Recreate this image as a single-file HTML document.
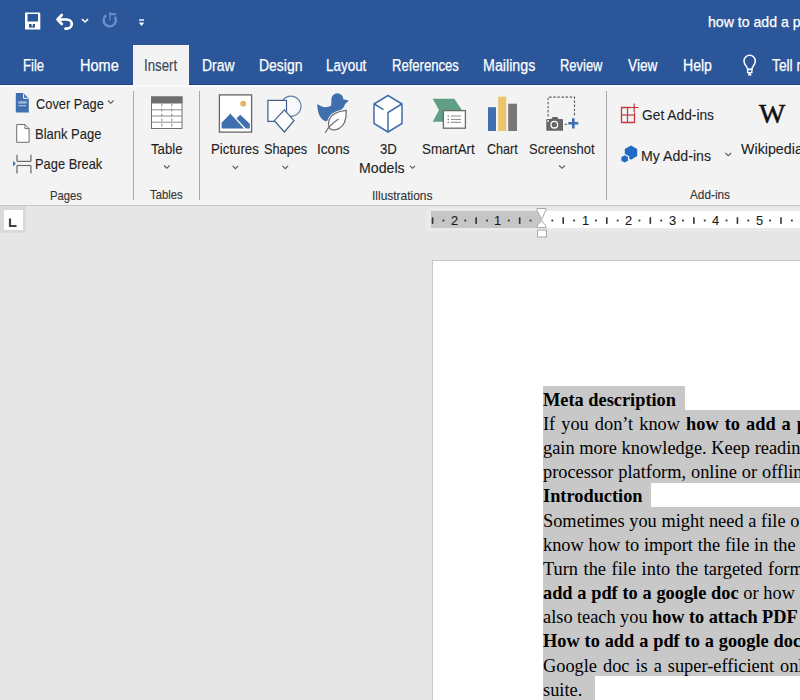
<!DOCTYPE html>
<html><head><meta charset="utf-8">
<style>
*{margin:0;padding:0;box-sizing:border-box}
html,body{width:800px;height:700px;overflow:hidden;background:#e6e6e6;font-family:"Liberation Sans",sans-serif}
.abs{position:absolute}
#title{position:absolute;left:0;top:0;width:800px;height:85px;background:#2b579a}
#ribbon{position:absolute;left:0;top:85px;width:800px;height:121px;background:#f3f3f3;border-bottom:1px solid #c8c8c8}
.t{position:absolute;white-space:nowrap;transform-origin:0 0;line-height:1;-webkit-text-stroke:0.12px currentColor}
.t[style*="#ffffff"],.tab{-webkit-text-stroke:0.25px #fff}
.tab{color:#fff;font-size:15px}
.lbl{color:#262626;font-size:14px}
.grp{color:#3c3c3c;font-size:12px}
.sep{position:absolute;width:1px;background:#aaaaaa;top:91px;height:109px}
.doc{position:absolute;white-space:nowrap;font-family:"Liberation Serif",serif;font-size:18.35px;color:#000;line-height:1}
.hl{position:absolute;background:#c8c8c8}
</style></head><body>
<div id="title"></div>
<!-- Quick access toolbar -->
<svg class="abs" style="left:0;top:0" width="160" height="40">
  <!-- save -->
  <path d="M25 12.5h14.5l0.8 0.8v16.1h-15.3z" fill="#fff"/>
  <rect x="27.5" y="14" width="10.5" height="7.5" fill="#2b579a"/>
  <rect x="29" y="24" width="6" height="3.6" fill="#2b579a"/>
  <rect x="31.6" y="24" width="1.2" height="2.4" fill="#fff"/>
  <!-- undo -->
  <path d="M57.5 19.5 L61.8 15 M57.5 19.5 L61.8 24 M57.5 19.5 H66.5 A5.3 4.6 0 0 1 66.5 28.7 H65.5" fill="none" stroke="#fff" stroke-width="2.7" stroke-linecap="round" stroke-linejoin="round"/>
  <path d="M82 19.2 L85 22 L88 19.2" fill="none" stroke="#fff" stroke-width="1.6"/>
  <!-- redo faded -->
  <path d="M106.3 15.2 A6.1 6.1 0 1 0 114.8 16.8" fill="none" stroke="#6a8ccb" stroke-width="2.5"/>
  <path d="M109.9 12 V20.5" fill="none" stroke="#6a8ccb" stroke-width="1.3"/>
  <path d="M109.9 14.2 H116.2" fill="none" stroke="#6a8ccb" stroke-width="2"/>
  <!-- customize -->
  <rect x="139" y="19.3" width="5" height="1.4" fill="#fff"/>
  <path d="M138.8 22.5 H144.2 L141.5 26 Z" fill="#fff"/>
</svg>
<div class="t tab" style="left:708px;top:14.2px;font-size:15px;transform:scaleX(0.94)">how to add a pdf to a google doc - Word</div>

<!-- Tabs -->
<div class="abs" style="left:133px;top:45px;width:56px;height:41px;background:#f3f3f3"></div>
<svg class="abs" style="left:738px;top:54px" width="24" height="24">
  <path d="M9.6 15.2 C9.6 12.8 6 11 6 7 A5.65 5.65 0 0 1 17.3 7 C17.3 11 13.9 12.8 13.9 15.2 Z" fill="none" stroke="#fff" stroke-width="1.5"/>
  <rect x="9.6" y="15.6" width="4.3" height="3" fill="none" stroke="#fff" stroke-width="1.3"/>
  <rect x="10.2" y="19.3" width="3.1" height="2.3" fill="#fff"/>
</svg>

<div id="ribbon"></div>
<div class="abs" style="left:0;top:84px;width:133px;height:1px;background:#1f4378"></div>
<div class="abs" style="left:189px;top:84px;width:611px;height:1px;background:#1f4378"></div>
<div class="abs" style="left:0;top:85px;width:800px;height:2px;background:#f8fafd"></div>
<div class="sep" style="left:133px"></div>
<div class="sep" style="left:199px"></div>
<div class="sep" style="left:606px"></div>

<!-- Pages group -->
<svg class="abs" style="left:0;top:85px" width="140" height="100">
  <!-- cover page: y offset 85 -->
  <path d="M15.8 8.1 H23.3 L28.8 13.6 V27.4 H15.8 Z" fill="#3f6fae"/>
  <path d="M23.6 8.6 V13.3 H28.3" fill="none" stroke="#fff" stroke-width="1"/>
  <rect x="18.3" y="16.2" width="8.4" height="2.4" fill="#c3d3e8" opacity="0.75"/>
  <rect x="18.5" y="20.2" width="7.6" height="1" fill="#c3d3e8"/>
  <!-- blank page -->
  <path d="M16.7 39.5 H25 L29.1 43.6 V57.3 H16.7 Z" fill="#fff" stroke="#6e6e6e" stroke-width="1"/>
  <path d="M25 39.5 V43.6 H29.1" fill="none" stroke="#6e6e6e" stroke-width="1"/>
  <!-- page break -->
  <line x1="17" y1="69.8" x2="17" y2="76.4" stroke="#7a7a7a" stroke-width="1.4"/>
  <line x1="30.9" y1="69.8" x2="30.9" y2="76.4" stroke="#7a7a7a" stroke-width="1.4"/>
  <line x1="17" y1="80.5" x2="17" y2="88.6" stroke="#7a7a7a" stroke-width="1.4"/>
  <line x1="30.9" y1="80.5" x2="30.9" y2="88.6" stroke="#7a7a7a" stroke-width="1.4"/>
  <line x1="17" y1="76.4" x2="30.9" y2="76.4" stroke="#6e6e6e" stroke-width="1.2"/>
  <line x1="17" y1="80.5" x2="30.9" y2="80.5" stroke="#6e6e6e" stroke-width="1.2"/>
  <path d="M13 76 L15.9 78.6 L13 81.5 Z" fill="#3f6fae"/>
  <path d="M108 15.5 L110.8 18.3 L113.6 15.5" fill="none" stroke="#555" stroke-width="1.1"/>
</svg>

<!-- Tables group -->
<svg class="abs" style="left:140px;top:85px" width="60" height="100">
  <rect x="11.5" y="12" width="30.5" height="31.5" fill="#fff" stroke="#6e6e6e" stroke-width="1"/>
  <rect x="11" y="11.5" width="31.5" height="7" fill="#6e6e6e"/>
  <line x1="11.5" y1="24.8" x2="42" y2="24.8" stroke="#8a8a8a" stroke-width="1"/>
  <line x1="11.5" y1="31" x2="42" y2="31" stroke="#8a8a8a" stroke-width="1"/>
  <line x1="11.5" y1="37.2" x2="42" y2="37.2" stroke="#8a8a8a" stroke-width="1"/>
  <line x1="21.8" y1="18.5" x2="21.8" y2="43.5" stroke="#8a8a8a" stroke-width="1" stroke-dasharray="3 2"/>
  <line x1="31.8" y1="18.5" x2="31.8" y2="43.5" stroke="#8a8a8a" stroke-width="1" stroke-dasharray="3 2"/>
  <path d="M24 80.5 L26.8 83.3 L29.6 80.5" fill="none" stroke="#555" stroke-width="1.1"/>
</svg>

<!-- Illustrations group -->
<svg class="abs" style="left:200px;top:85px" width="410" height="100">
  <!-- pictures -->
  <rect x="19.4" y="9.9" width="32.2" height="37.2" fill="#fff" stroke="#666" stroke-width="1.3"/>
  <circle cx="43.2" cy="18.7" r="2.9" fill="#e2b75a"/>
  <path d="M21.6 43.6 V37.8 L30.8 28.3 L39.5 37 L44.5 43.6 Z" fill="#3f6fae"/>
  <path d="M36.4 33.6 L40.2 29.8 L49.8 38.8 V43.6 H45.8 Z" fill="#3f6fae"/>
  <path d="M30.8 28.3 L45.2 43.8" stroke="#fff" stroke-width="1.2"/>
  <path d="M32.6 80.8 L35.4 83.6 L38.2 80.8" fill="none" stroke="#555" stroke-width="1.1"/>
  <!-- shapes -->
  <circle cx="90.9" cy="21.3" r="10.1" fill="#f8f9fb" stroke="#6781a6" stroke-width="1.2"/>
  <rect x="67.9" y="15.4" width="18.6" height="21" fill="#fbfcfd" stroke="#415e8a" stroke-width="1.2"/>
  <path d="M84.4 24.8 L93.9 35.7 L84.4 47 L74.3 35.7 Z" fill="#fbfcfd" stroke="#415e8a" stroke-width="1.2"/>
  <path d="M82.5 80.8 L85.3 83.6 L88.1 80.8" fill="none" stroke="#555" stroke-width="1.1"/>
  <!-- icons: duck + leaf -->
  <path d="M117.3 19.1 C120 21 122.5 22.3 125.2 22.3 C127.5 22.3 129.5 21.6 131.2 20.6 C131.3 18.5 131.4 16.5 131.4 14.2 A5.9 5.9 0 0 1 143.3 14.3 L148.8 15.4 L144.9 19.2 C144.6 21 143.5 22.8 142 24 C139 27 134 32 129 35 C127.5 35.8 126 36.2 125.2 36.2 C120 34 117.3 28 117.3 19.1 Z" fill="#3f6fae"/>
  <path d="M146.2 25.4 C140 26 131.5 28 129.2 35 C127.8 39.5 128.8 43.5 131.8 44.6 C136 46 142 43 144.5 37.5 C146 33.5 146.4 28.5 146.2 25.4 Z" fill="#fff" stroke="#f3f3f3" stroke-width="3"/>
  <path d="M146.2 25.4 C140 26 131.5 28 129.2 35 C127.8 39.5 128.8 43.5 131.8 44.6 C136 46 142 43 144.5 37.5 C146 33.5 146.4 28.5 146.2 25.4 Z" fill="#fff" stroke="#6e6e6e" stroke-width="1.3"/>
  <path d="M125.2 47.8 C129 41 133 37.5 138.6 34" fill="none" stroke="#6e6e6e" stroke-width="1.3"/>
  <!-- 3D cube -->
  <path d="M188 10.5 L202 19 V38.5 L188 47 L174 38.5 V19 Z" fill="#fff" stroke="#3f6fae" stroke-width="1.5"/>
  <path d="M174.3 19 L183.5 24.6 M201.7 19 L188 27.5 V46.5" fill="none" stroke="#3f6fae" stroke-width="1.5"/>
  <path d="M210 80.8 L212.5 83.3 L215 80.8" fill="none" stroke="#555" stroke-width="1.1"/>
  <!-- smartart -->
  <path d="M232.7 13.8 H254.3 L261.5 24.5 L254 36.7 H232.7 L239 25 Z" fill="#5f9f86"/>
  <rect x="243.4" y="25.6" width="22" height="17.6" fill="#fff" stroke="#6a6a6a" stroke-width="1.3"/>
  <rect x="247.6" y="30.4" width="1.3" height="1.3" fill="#6e6e6e"/>
  <rect x="247.6" y="33.8" width="1.3" height="1.3" fill="#6e6e6e"/>
  <rect x="247.6" y="36.7" width="1.3" height="1.3" fill="#6e6e6e"/>
  <line x1="250.8" y1="31" x2="261" y2="31" stroke="#7a7a7a" stroke-width="0.9"/>
  <line x1="250.8" y1="34.4" x2="261" y2="34.4" stroke="#7a7a7a" stroke-width="0.9"/>
  <line x1="250.8" y1="37.3" x2="261" y2="37.3" stroke="#7a7a7a" stroke-width="0.9"/>
  <!-- chart -->
  <rect x="288" y="22.2" width="8" height="23.8" fill="#3f6fae"/>
  <rect x="298.2" y="11.7" width="8" height="34.3" fill="#e9c46a"/>
  <rect x="308.2" y="18.7" width="8.8" height="27.3" fill="#767676"/>
  <!-- screenshot -->
  <path d="M348.1 31.5 V12.1 H374.5 V31.5" fill="none" stroke="#5a5a5a" stroke-width="1.1" stroke-dasharray="2.4 1.7"/>
  <path d="M346.3 35 Q346.3 34 347.3 34 H351.5 L352.5 32 H357.5 L358.5 34 H362 Q363 34 363 35 V45.7 H346.3 Z" fill="#666"/>
  <circle cx="354.3" cy="39.7" r="3.3" fill="#666" stroke="#fff" stroke-width="1.3"/>
  <rect x="347.3" y="35.2" width="1.6" height="1.5" fill="#fff"/>
  <line x1="364.8" y1="39.3" x2="367.2" y2="39.3" stroke="#555" stroke-width="1"/>
  <path d="M368.3 38.3 H378.3 M373.3 33.2 V43.4" stroke="#3f6fae" stroke-width="2.6"/>
  <path d="M359.2 80.5 L362 83.3 L364.8 80.5" fill="none" stroke="#555" stroke-width="1.1"/>
</svg>

<!-- Add-ins group -->
<svg class="abs" style="left:610px;top:85px" width="190" height="100">
  <path d="M20.5 22.5 H11.5 V37.5 H24.5 V27.5" fill="none" stroke="#c4383d" stroke-width="1.3"/>
  <line x1="11.5" y1="30" x2="24.5" y2="30" stroke="#c4383d" stroke-width="1.2"/>
  <line x1="17.5" y1="22.5" x2="17.5" y2="37.5" stroke="#b04a4a" stroke-width="1.2"/>
  <path d="M20 22.5 H28.5 M24.2 18.5 V27" stroke="#c4383d" stroke-width="1.2"/>
  <path d="M21 60.5 L27.2 64 V71 L21 74.8 L14.8 71 V64 Z" fill="#1f6bc5"/>
  <path d="M14.7 69.5 L18.6 71.7 V76 L14.7 78.2 L10.8 76 V71.7 Z" fill="#1f6bc5" stroke="#f3f3f3" stroke-width="1.2"/>
  <path d="M115.5 68 L118.3 70.8 L121.1 68" fill="none" stroke="#555" stroke-width="1.1"/>
</svg>
<div class="t" style="left:759.2px;top:100.6px;font-family:'Liberation Serif',serif;font-size:26.5px;color:#111;-webkit-text-stroke:0.5px #111;transform:scaleX(1.05)">W</div>
<!-- LABELS -->
<div class="t" style="left:22.58px;top:57.76px;font-size:16px;color:#ffffff;transform:scaleX(0.818)">File</div>
<div class="t" style="left:80.09px;top:57.76px;font-size:16px;color:#ffffff;transform:scaleX(0.909)">Home</div>
<div class="t" style="left:143.57px;top:57.86px;font-size:16px;color:#3b4658;transform:scaleX(0.829)">Insert</div>
<div class="t" style="left:201.63px;top:57.76px;font-size:16px;color:#ffffff;transform:scaleX(0.870)">Draw</div>
<div class="t" style="left:258.63px;top:57.76px;font-size:16px;color:#ffffff;transform:scaleX(0.871)">Design</div>
<div class="t" style="left:326.16px;top:57.76px;font-size:16px;color:#ffffff;transform:scaleX(0.840)">Layout</div>
<div class="t" style="left:391.58px;top:57.66px;font-size:16px;color:#ffffff;transform:scaleX(0.817)">References</div>
<div class="t" style="left:482.71px;top:57.76px;font-size:16px;color:#ffffff;transform:scaleX(0.891)">Mailings</div>
<div class="t" style="left:560.19px;top:57.76px;font-size:16px;color:#ffffff;transform:scaleX(0.809)">Review</div>
<div class="t" style="left:628.00px;top:57.76px;font-size:16px;color:#ffffff;transform:scaleX(0.855)">View</div>
<div class="t" style="left:682.87px;top:57.76px;font-size:16px;color:#ffffff;transform:scaleX(0.879)">Help</div>
<div class="t" style="left:35.70px;top:95.90px;font-size:15px;color:#1f1f1f;transform:scaleX(0.856)">Cover Page</div>
<div class="t" style="left:34.83px;top:126.30px;font-size:15px;color:#1f1f1f;transform:scaleX(0.866)">Blank Page</div>
<div class="t" style="left:34.84px;top:156.30px;font-size:15px;color:#1f1f1f;transform:scaleX(0.858)">Page Break</div>
<div class="t" style="left:151.00px;top:140.70px;font-size:15px;color:#1f1f1f;transform:scaleX(0.881)">Table</div>
<div class="t" style="left:210.82px;top:140.60px;font-size:15px;color:#1f1f1f;transform:scaleX(0.883)">Pictures</div>
<div class="t" style="left:263.50px;top:140.60px;font-size:15px;color:#1f1f1f;transform:scaleX(0.848)">Shapes</div>
<div class="t" style="left:316.59px;top:140.60px;font-size:15px;color:#1f1f1f;transform:scaleX(0.908)">Icons</div>
<div class="t" style="left:379.70px;top:140.60px;font-size:15px;color:#1f1f1f;transform:scaleX(0.879)">3D</div>
<div class="t" style="left:358.56px;top:160.00px;font-size:15px;color:#1f1f1f;transform:scaleX(0.943)">Models</div>
<div class="t" style="left:422.20px;top:140.60px;font-size:15px;color:#1f1f1f;transform:scaleX(0.892)">SmartArt</div>
<div class="t" style="left:486.70px;top:140.60px;font-size:15px;color:#1f1f1f;transform:scaleX(0.840)">Chart</div>
<div class="t" style="left:528.90px;top:140.60px;font-size:15px;color:#1f1f1f;transform:scaleX(0.863)">Screenshot</div>
<div class="t" style="left:642.00px;top:106.58px;font-size:15.5px;color:#1f1f1f;transform:scaleX(0.889)">Get Add-ins</div>
<div class="t" style="left:641.09px;top:147.68px;font-size:15.5px;color:#1f1f1f;transform:scaleX(0.913)">My Add-ins</div>
<div class="t" style="left:49.63px;top:188.50px;font-size:13px;color:#333333;transform:scaleX(0.866)">Pages</div>
<div class="t" style="left:150.20px;top:188.30px;font-size:13px;color:#333333;transform:scaleX(0.867)">Tables</div>
<div class="t" style="left:372.18px;top:188.70px;font-size:13px;color:#333333;transform:scaleX(0.920)">Illustrations</div>
<div class="t" style="left:689.60px;top:188.40px;font-size:13px;color:#333333;transform:scaleX(0.906)">Add-ins</div>
<div class="t" style="left:771.90px;top:57.76px;font-size:16px;color:#ffffff;transform:scaleX(0.860)">Tell me what you want to do</div>
<div class="t" style="left:741.00px;top:140.58px;font-size:15.5px;color:#1f1f1f;transform:scaleX(0.920)">Wikipedia</div>
<!-- RULER -->
<div class="abs" style="left:0;top:206px;width:26px;height:27px;background:#dadada"></div>
<div class="abs" style="left:3.5px;top:209.5px;width:19px;height:20.5px;background:#fff"></div>
<svg class="abs" style="left:0;top:206px" width="26" height="27"><path d="M10 12.5 V20 H16.5" fill="none" stroke="#444" stroke-width="2.2"/></svg>
<div class="abs" style="left:426px;top:208px;width:374px;height:23px;background:#eaeaea"></div>
<div class="abs" style="left:431px;top:211px;width:110px;height:17px;background:#c6c6c6"></div>
<div class="abs" style="left:541px;top:211px;width:260px;height:17px;background:#fff"></div>
<svg class="abs" style="left:0;top:0" width="800" height="245">
<rect x="431.78" y="217.3" width="1.6" height="6.6" fill="#333"/>
<rect x="442.56" y="219.6" width="1.8" height="1.8" fill="#333"/>
<rect x="464.34" y="219.6" width="1.8" height="1.8" fill="#333"/>
<rect x="475.33" y="217.3" width="1.6" height="6.6" fill="#333"/>
<rect x="486.11" y="219.6" width="1.8" height="1.8" fill="#333"/>
<rect x="507.89" y="219.6" width="1.8" height="1.8" fill="#333"/>
<rect x="518.88" y="217.3" width="1.6" height="6.6" fill="#333"/>
<rect x="529.66" y="219.6" width="1.8" height="1.8" fill="#333"/>
<rect x="551.44" y="219.6" width="1.8" height="1.8" fill="#333"/>
<rect x="562.43" y="217.3" width="1.6" height="6.6" fill="#333"/>
<rect x="573.21" y="219.6" width="1.8" height="1.8" fill="#333"/>
<rect x="594.99" y="219.6" width="1.8" height="1.8" fill="#333"/>
<rect x="605.98" y="217.3" width="1.6" height="6.6" fill="#333"/>
<rect x="616.76" y="219.6" width="1.8" height="1.8" fill="#333"/>
<rect x="638.54" y="219.6" width="1.8" height="1.8" fill="#333"/>
<rect x="649.53" y="217.3" width="1.6" height="6.6" fill="#333"/>
<rect x="660.31" y="219.6" width="1.8" height="1.8" fill="#333"/>
<rect x="682.09" y="219.6" width="1.8" height="1.8" fill="#333"/>
<rect x="693.08" y="217.3" width="1.6" height="6.6" fill="#333"/>
<rect x="703.86" y="219.6" width="1.8" height="1.8" fill="#333"/>
<rect x="725.64" y="219.6" width="1.8" height="1.8" fill="#333"/>
<rect x="736.63" y="217.3" width="1.6" height="6.6" fill="#333"/>
<rect x="747.41" y="219.6" width="1.8" height="1.8" fill="#333"/>
<rect x="769.19" y="219.6" width="1.8" height="1.8" fill="#333"/>
<rect x="780.18" y="217.3" width="1.6" height="6.6" fill="#333"/>
<rect x="790.96" y="219.6" width="1.8" height="1.8" fill="#333"/>
<path d="M537 208.5 H546 V210 L541.5 219.5 L537 210 Z" fill="#fff" stroke="#a8a8a8" stroke-width="1"/>
<path d="M541.5 220.5 L546 226 V227.5 H537 V226 Z" fill="#fff" stroke="#a8a8a8" stroke-width="1"/>
<rect x="537.5" y="230" width="9" height="7" fill="#fff" stroke="#a8a8a8" stroke-width="1"/>
</svg>
<div class="t" style="left:450.85px;top:213.9px;font-size:13.5px;color:#1a1a1a;transform:scaleX(0.95)">2</div>
<div class="t" style="left:494.40px;top:213.9px;font-size:13.5px;color:#1a1a1a;transform:scaleX(0.95)">1</div>
<div class="t" style="left:581.50px;top:213.9px;font-size:13.5px;color:#1a1a1a;transform:scaleX(0.95)">1</div>
<div class="t" style="left:625.05px;top:213.9px;font-size:13.5px;color:#1a1a1a;transform:scaleX(0.95)">2</div>
<div class="t" style="left:668.60px;top:213.9px;font-size:13.5px;color:#1a1a1a;transform:scaleX(0.95)">3</div>
<div class="t" style="left:712.15px;top:213.9px;font-size:13.5px;color:#1a1a1a;transform:scaleX(0.95)">4</div>
<div class="t" style="left:755.70px;top:213.9px;font-size:13.5px;color:#1a1a1a;transform:scaleX(0.95)">5</div>
<div class="abs" style="left:432px;top:260px;width:380px;height:460px;background:#fff;border:1px solid #c6c6c6;border-right:none;border-bottom:none"></div>
<!-- DOC -->
<div class="hl" style="left:543px;top:386.00px;width:142px;height:24.27px"></div>
<div class="hl" style="left:543px;top:410.17px;width:257px;height:24.27px"></div>
<div class="hl" style="left:543px;top:434.34px;width:257px;height:24.27px"></div>
<div class="hl" style="left:543px;top:458.51px;width:257px;height:24.27px"></div>
<div class="hl" style="left:543px;top:482.68px;width:108px;height:24.27px"></div>
<div class="hl" style="left:543px;top:506.85px;width:257px;height:24.27px"></div>
<div class="hl" style="left:543px;top:531.02px;width:257px;height:24.27px"></div>
<div class="hl" style="left:543px;top:555.19px;width:257px;height:24.27px"></div>
<div class="hl" style="left:543px;top:579.36px;width:257px;height:24.27px"></div>
<div class="hl" style="left:543px;top:603.53px;width:257px;height:24.27px"></div>
<div class="hl" style="left:543px;top:627.70px;width:257px;height:24.27px"></div>
<div class="hl" style="left:543px;top:651.87px;width:257px;height:24.27px"></div>
<div class="hl" style="left:543px;top:676.04px;width:52px;height:24.27px"></div>
<div class="doc" style="left:543px;top:390.73px;word-spacing:0px"><b>Meta description</b></div>
<div class="doc" style="left:543px;top:414.90px;word-spacing:1.45px">If you don’t know <b>how to add a pdf to a google doc</b></div>
<div class="doc" style="left:543px;top:439.07px;word-spacing:0.08px">gain more knowledge. Keep reading this article</div>
<div class="doc" style="left:543px;top:463.24px;word-spacing:0.4px">processor platform, online or offline</div>
<div class="doc" style="left:543px;top:487.41px;word-spacing:0px"><b>Introduction</b></div>
<div class="doc" style="left:543px;top:511.58px;word-spacing:0.11px">Sometimes you might need a file of</div>
<div class="doc" style="left:543px;top:535.75px;word-spacing:0.2px">know how to import the file in the</div>
<div class="doc" style="left:543px;top:559.92px;word-spacing:1.0px">Turn the file into the targeted format</div>
<div class="doc" style="left:543px;top:584.09px;word-spacing:0.15px"><b>add a pdf to a google doc</b> or how</div>
<div class="doc" style="left:543px;top:608.26px;word-spacing:-0.18px">also teach you <b>how to attach PDF</b></div>
<div class="doc" style="left:543px;top:632.43px;word-spacing:0.28px"><b>How to add a pdf to a google doc</b></div>
<div class="doc" style="left:543px;top:656.60px;word-spacing:1.39px">Google doc is a super-efficient online</div>
<div class="doc" style="left:543px;top:680.77px;word-spacing:0px">suite.</div>
</body></html>
